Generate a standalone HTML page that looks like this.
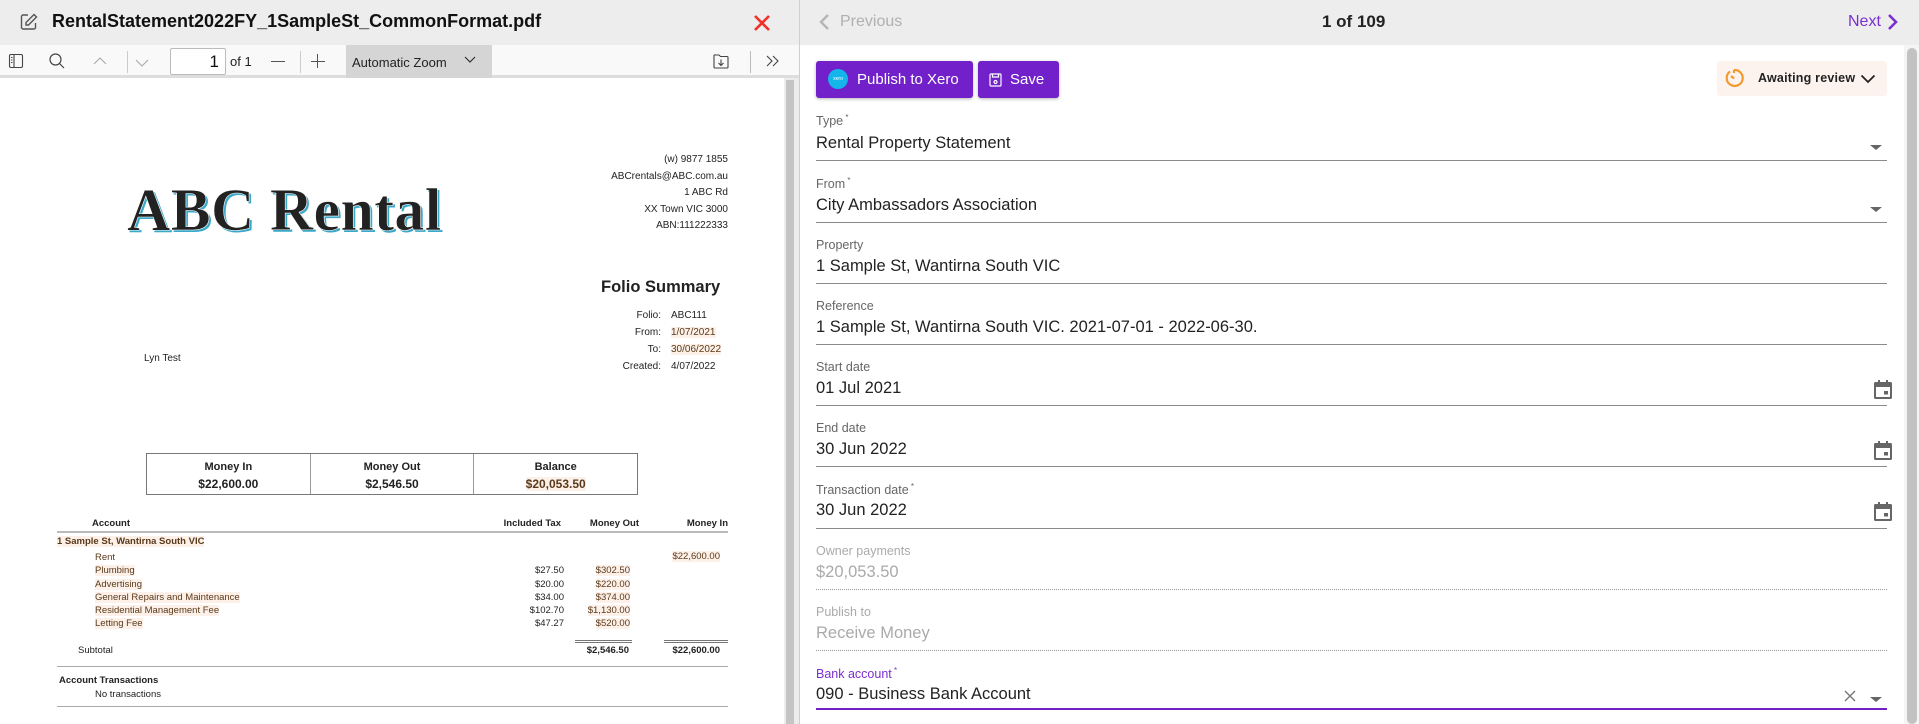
<!DOCTYPE html>
<html><head><meta charset="utf-8"><style>
*{margin:0;padding:0;box-sizing:border-box}
body{width:1919px;height:724px;overflow:hidden;background:#fff;font-family:"Liberation Sans",Arial,sans-serif;position:relative;color:#222}
.a{position:absolute;white-space:nowrap}
.pdf{font-size:10px;color:#222}
.r{text-align:right}
.lab{position:absolute;left:816px;font-size:12.5px;color:#666}
.val{position:absolute;left:816px;font-size:16.5px;color:#222}
.ul{position:absolute;left:816px;width:1071px;height:1px;background:#8a8a8a}
.dot{position:absolute;left:816px;width:1071px;border-top:1px dotted #999}
.hl{background:#fcf0e8}
.br{color:#5a3a1a}
</style></head><body>
<div class="a" style="left:0;top:0;width:799px;height:45px;background:#ededed"></div>
<svg class="a" style="left:19px;top:12px" width="20" height="20" viewBox="0 0 20 20" fill="none" stroke="#555" stroke-width="1.4"><path d="M9 3H4a1.5 1.5 0 0 0-1.5 1.5v11A1.5 1.5 0 0 0 4 17h11a1.5 1.5 0 0 0 1.5-1.5V11"/><path d="M15 2.5l2.5 2.5-8 8H7v-2.5z"/></svg>
<div class="a" style="left:52px;top:11px;font-size:18px;font-weight:bold;color:#111">RentalStatement2022FY_1SampleSt_CommonFormat.pdf</div>
<svg class="a" style="left:753px;top:14px" width="18" height="18" viewBox="0 0 18 18" stroke="#f0302a" stroke-width="2.6"><path d="M2 2L16 16M16 2L2 16"/></svg>
<div class="a" style="left:0;top:45px;width:799px;height:33px;background:#f9f9f9;border-bottom:3px solid #ddd"></div>
<svg class="a" style="left:8px;top:53px" width="16" height="16" viewBox="0 0 16 16" fill="none" stroke="#444" stroke-width="1.1"><rect x="1.5" y="1.5" width="13" height="13" rx="1.5"/><path d="M6 1.5v13M3 4.5h1.5M3 7h1.5M3 9.5h1.5"/></svg>
<svg class="a" style="left:48px;top:52px" width="18" height="18" viewBox="0 0 18 18" fill="none" stroke="#444" stroke-width="1.2"><circle cx="7.5" cy="7.5" r="5.5"/><path d="M11.5 11.5L16 16"/></svg>
<svg class="a" style="left:92px;top:56px" width="16" height="10" viewBox="0 0 16 10" fill="none" stroke="#aaa" stroke-width="1.1"><path d="M2 8L8 2l6 6"/></svg>
<div class="a" style="left:127px;top:51px;width:1px;height:22px;background:#ccc"></div>
<svg class="a" style="left:134px;top:58px" width="16" height="10" viewBox="0 0 16 10" fill="none" stroke="#aaa" stroke-width="1.1"><path d="M2 2l6 6 6-6"/></svg>
<div class="a" style="left:170px;top:48px;width:56px;height:27px;background:#fff;border:1px solid #bbb;border-radius:2px;font-size:17px;text-align:right;padding:3px 6px 0 0;color:#111">1</div>
<div class="a" style="left:230px;top:54px;font-size:13px;color:#222">of 1</div>
<div class="a" style="left:271px;top:61px;width:14px;height:1.3px;background:#555"></div>
<div class="a" style="left:300px;top:51px;width:1px;height:22px;background:#ccc"></div>
<div class="a" style="left:311px;top:61px;width:14px;height:1.3px;background:#555"></div>
<div class="a" style="left:317px;top:54px;width:1.3px;height:14px;background:#555"></div>
<div class="a" style="left:346px;top:45px;width:146px;height:33px;background:#d5d5d5"></div>
<div class="a" style="left:352px;top:55px;font-size:13px;color:#222">Automatic Zoom</div>
<svg class="a" style="left:464px;top:56px" width="12" height="8" viewBox="0 0 12 8" fill="none" stroke="#333" stroke-width="1.2"><path d="M1 1l5 5 5-5"/></svg>
<svg class="a" style="left:712px;top:52px" width="18" height="18" viewBox="0 0 18 18" fill="none" stroke="#444" stroke-width="1.1"><path d="M2 4.5V15a1 1 0 0 0 1 1h12a1 1 0 0 0 1-1V5.5a1 1 0 0 0-1-1H8.5L7 3H3a1 1 0 0 0-1 1.5z"/><path d="M9 7.5v6M6.5 11L9 13.5 11.5 11"/></svg>
<div class="a" style="left:750px;top:51px;width:1px;height:22px;background:#bbb"></div>
<svg class="a" style="left:765px;top:55px" width="16" height="12" viewBox="0 0 16 12" fill="none" stroke="#444" stroke-width="1.1"><path d="M2 1l5 5-5 5M8 1l5 5-5 5"/></svg>
<div class="a" style="left:784px;top:78px;width:15px;height:646px;background:#ececec"></div>
<div class="a" style="left:786px;top:80px;width:8px;height:644px;background:#c4c4c4"></div>
<div class="a" style="left:799px;top:0;width:1px;height:724px;background:#cfcfcf"></div>

<div class="a" style="left:127px;top:176px;font-family:'Liberation Serif',serif;font-weight:bold;font-size:60px;color:#222;text-shadow:2px 2px 0 #3aa8c8;-webkit-text-stroke:0.6px #fff;letter-spacing:0.3px">ABC Rental</div>
<div class="a pdf r" style="right:1191px;top:152px;line-height:16.5px">(w) 9877 1855<br>ABCrentals@ABC.com.au<br>1 ABC Rd<br>XX Town VIC 3000<br>ABN:111222333</div>
<div class="a" style="left:601px;top:278px;font-size:16.5px;font-weight:bold;color:#222">Folio Summary</div>
<div class="a pdf r" style="right:1258px;top:307px;line-height:17px">Folio:<br>From:<br>To:<br>Created:</div>
<div class="a pdf" style="left:671px;top:307px;line-height:17px">ABC111<br><span class="br hl">1/07/2021</span><br><span class="br hl">30/06/2022</span><br>4/07/2022</div>
<div class="a pdf" style="left:144px;top:353px">Lyn Test</div>
<div class="a" style="left:146px;top:453px;width:492px;height:42px;border:1px solid #777;display:flex">
 <div style="flex:1;border-right:1px solid #999;text-align:center;font-weight:bold;font-size:11px;padding-top:5px;line-height:17px">Money In<br><span style="font-size:12px">$22,600.00</span></div>
 <div style="flex:1;border-right:1px solid #999;text-align:center;font-weight:bold;font-size:11px;padding-top:5px;line-height:17px">Money Out<br><span style="font-size:12px">$2,546.50</span></div>
 <div style="flex:1;text-align:center;font-weight:bold;font-size:11px;padding-top:5px;line-height:17px">Balance<br><span class="br hl" style="font-size:12px">$20,053.50</span></div>
</div>
<div class="a pdf" style="left:92px;top:518px;font-weight:bold;font-size:9.5px">Account</div>
<div class="a pdf r" style="right:1358px;top:518px;font-weight:bold;font-size:9.5px">Included Tax</div>
<div class="a pdf r" style="right:1280px;top:518px;font-weight:bold;font-size:9.5px">Money Out</div>
<div class="a pdf r" style="right:1191px;top:518px;font-weight:bold;font-size:9.5px">Money In</div>
<div class="a" style="left:57px;top:531px;width:671px;height:2px;background:#bbb"></div>
<div class="a pdf br" style="left:57px;top:536px;font-weight:bold;font-size:9.5px"><span class="hl">1 Sample St, Wantirna South VIC</span></div>
<div class="a pdf br" style="left:95px;top:551px;line-height:13.3px;font-size:9.5px">Rent<br><span class="hl">Plumbing</span><br><span class="hl">Advertising</span><br><span class="hl">General Repairs and Maintenance</span><br><span class="hl">Residential Management Fee</span><br><span class="hl">Letting Fee</span></div>
<div class="a pdf r" style="right:1355px;top:551px;line-height:13.3px;font-size:9.5px"><br>$27.50<br>$20.00<br>$34.00<br>$102.70<br>$47.27</div>
<div class="a pdf r br" style="right:1289px;top:551px;line-height:13.3px;font-size:9.5px"><br><span class="hl">$302.50</span><br><span class="hl">$220.00</span><br><span class="hl">$374.00</span><br><span class="hl">$1,130.00</span><br><span class="hl">$520.00</span></div>
<div class="a pdf r br" style="right:1199px;top:551px;font-size:9.5px"><span class="hl">$22,600.00</span></div>
<div class="a" style="left:575px;top:640px;width:57px;height:3px;border-top:1px solid #777;border-bottom:1px solid #777"></div>
<div class="a" style="left:664px;top:640px;width:64px;height:3px;border-top:1px solid #777;border-bottom:1px solid #777"></div>
<div class="a pdf" style="left:78px;top:645px;font-size:9.5px">Subtotal</div>
<div class="a pdf r" style="right:1290px;top:645px;font-weight:bold;font-size:9.5px">$2,546.50</div>
<div class="a pdf r" style="right:1199px;top:645px;font-weight:bold;font-size:9.5px">$22,600.00</div>
<div class="a" style="left:57px;top:666px;width:671px;height:1px;background:#aaa"></div>
<div class="a pdf" style="left:59px;top:675px;font-weight:bold;font-size:9.5px">Account Transactions</div>
<div class="a pdf" style="left:95px;top:689px;font-size:9.5px">No transactions</div>
<div class="a" style="left:57px;top:706px;width:671px;height:1px;background:#aaa"></div>

<div class="a" style="left:800px;top:0;width:1119px;height:45px;background:#ededed"></div>
<svg class="a" style="left:818px;top:13px" width="12" height="18" viewBox="0 0 12 18" fill="none" stroke="#b5b5b5" stroke-width="2.4"><path d="M10 2L3 9l7 7"/></svg>
<div class="a" style="left:840px;top:13px;font-size:16px;color:#b0b0b0">Previous</div>
<div class="a" style="left:1322px;top:12px;font-size:17px;font-weight:bold;color:#222">1 of 109</div>
<div class="a" style="left:1848px;top:13px;font-size:16px;color:#7a2fd0">Next</div>
<svg class="a" style="left:1887px;top:13px" width="12" height="18" viewBox="0 0 12 18" fill="none" stroke="#7a2fd0" stroke-width="2.6"><path d="M2 2l7 7-7 7"/></svg>
<div class="a" style="left:1904px;top:45px;width:15px;height:679px;background:#f4f4f4"></div>
<div class="a" style="left:1907px;top:48px;width:10px;height:676px;background:#c2c2c2;border-radius:5px"></div>
<div class="a" style="left:816px;top:61px;width:157px;height:37px;background:#7220c9;border-radius:3px;box-shadow:0 1px 3px rgba(0,0,0,.3)"></div>
<div class="a" style="left:828px;top:69px;width:20px;height:20px;border-radius:50%;background:#13b5ea;color:#fff;font-size:5px;text-align:center;line-height:20px">xero</div>
<div class="a" style="left:857px;top:71px;font-size:15px;color:#fff">Publish to Xero</div>
<div class="a" style="left:978px;top:61px;width:81px;height:37px;background:#7220c9;border-radius:3px;box-shadow:0 1px 3px rgba(0,0,0,.3)"></div>
<svg class="a" style="left:989px;top:73px" width="13" height="14" viewBox="0 0 13 14" fill="none" stroke="#fff" stroke-width="1.2"><rect x="1" y="1" width="11" height="12" rx="1"/><path d="M3.5 1v3h6V1"/><circle cx="6.5" cy="9" r="1.5"/></svg>
<div class="a" style="left:1010px;top:71px;font-size:15px;color:#fff">Save</div>
<div class="a" style="left:1717px;top:61px;width:170px;height:35px;background:#fdf3ee;border-radius:3px"></div>
<svg class="a" style="left:1723px;top:67px" width="22" height="22" viewBox="0 0 22 22" fill="none" stroke="#f39a2e" stroke-width="2.2"><path d="M7 4.5A8 8 0 1 0 11 3"/><path d="M11 3v3"/><path d="M8 9l3 2.5"/></svg>
<div class="a" style="left:1758px;top:71px;font-size:12.5px;font-weight:bold;color:#222;letter-spacing:.2px">Awaiting review</div>
<svg class="a" style="left:1860px;top:74px" width="16" height="10" viewBox="0 0 16 10" fill="none" stroke="#222" stroke-width="1.8"><path d="M1.5 1.5L8 8l6.5-6.5"/></svg>

<div class="lab" style="top:113px">Type<sup style="font-size:8px"> *</sup></div>
<div class="val" style="top:134px">Rental Property Statement</div>
<div class="ul" style="top:160px"></div>
<div class="lab" style="top:176px">From<sup style="font-size:8px"> *</sup></div>
<div class="val" style="top:196px">City Ambassadors Association</div>
<div class="ul" style="top:222px"></div>
<div class="lab" style="top:238px">Property</div>
<div class="val" style="top:257px">1 Sample St, Wantirna South VIC</div>
<div class="ul" style="top:283px"></div>
<div class="lab" style="top:299px">Reference</div>
<div class="val" style="top:318px">1 Sample St, Wantirna South VIC. 2021-07-01 - 2022-06-30.</div>
<div class="ul" style="top:344px"></div>
<div class="lab" style="top:360px">Start date</div>
<div class="val" style="top:379px">01 Jul 2021</div>
<div class="ul" style="top:405px"></div>
<div class="lab" style="top:421px">End date</div>
<div class="val" style="top:440px">30 Jun 2022</div>
<div class="ul" style="top:466px"></div>
<div class="lab" style="top:482px">Transaction date<sup style="font-size:8px"> *</sup></div>
<div class="val" style="top:501px">30 Jun 2022</div>
<div class="ul" style="top:528px"></div>
<div class="lab" style="top:544px;color:#aaa">Owner payments</div>
<div class="val" style="top:563px;color:#aaa">$20,053.50</div>
<div class="dot" style="top:589px"></div>
<div class="lab" style="top:605px;color:#aaa">Publish to</div>
<div class="val" style="top:624px;color:#aaa">Receive Money</div>
<div class="dot" style="top:650px"></div>
<div class="lab" style="top:666px;color:#7a2fd0">Bank account<sup style="font-size:8px"> *</sup></div>
<div class="val" style="top:685px">090 - Business Bank Account</div>
<div class="a" style="left:816px;top:708px;width:1071px;height:2px;background:#7220c9"></div>
<div class="a" style="left:1870px;top:145px;border-left:6px solid transparent;border-right:6px solid transparent;border-top:5px solid #666"></div>
<div class="a" style="left:1870px;top:207px;border-left:6px solid transparent;border-right:6px solid transparent;border-top:5px solid #666"></div>
<div class="a" style="left:1870px;top:697px;border-left:6px solid transparent;border-right:6px solid transparent;border-top:5px solid #666"></div>
<svg class="a" style="left:1843px;top:689px" width="14" height="14" viewBox="0 0 14 14" stroke="#777" stroke-width="1.4"><path d="M2 2l10 10M12 2L2 12"/></svg>
<svg class="a" style="left:1874px;top:380px" width="18" height="19" viewBox="0 0 18 19" fill="#666"><path d="M4 0h2v2h6V0h2v2h2.5A1.5 1.5 0 0 1 18 3.5v14a1.5 1.5 0 0 1-1.5 1.5h-15A1.5 1.5 0 0 1 0 17.5v-14A1.5 1.5 0 0 1 1.5 2H4zM2 7v10h14V7z"/><rect x="10" y="11" width="4" height="3.5"/></svg>
<svg class="a" style="left:1874px;top:441px" width="18" height="19" viewBox="0 0 18 19" fill="#666"><path d="M4 0h2v2h6V0h2v2h2.5A1.5 1.5 0 0 1 18 3.5v14a1.5 1.5 0 0 1-1.5 1.5h-15A1.5 1.5 0 0 1 0 17.5v-14A1.5 1.5 0 0 1 1.5 2H4zM2 7v10h14V7z"/><rect x="10" y="11" width="4" height="3.5"/></svg>
<svg class="a" style="left:1874px;top:502px" width="18" height="19" viewBox="0 0 18 19" fill="#666"><path d="M4 0h2v2h6V0h2v2h2.5A1.5 1.5 0 0 1 18 3.5v14a1.5 1.5 0 0 1-1.5 1.5h-15A1.5 1.5 0 0 1 0 17.5v-14A1.5 1.5 0 0 1 1.5 2H4zM2 7v10h14V7z"/><rect x="10" y="11" width="4" height="3.5"/></svg>
</body></html>
